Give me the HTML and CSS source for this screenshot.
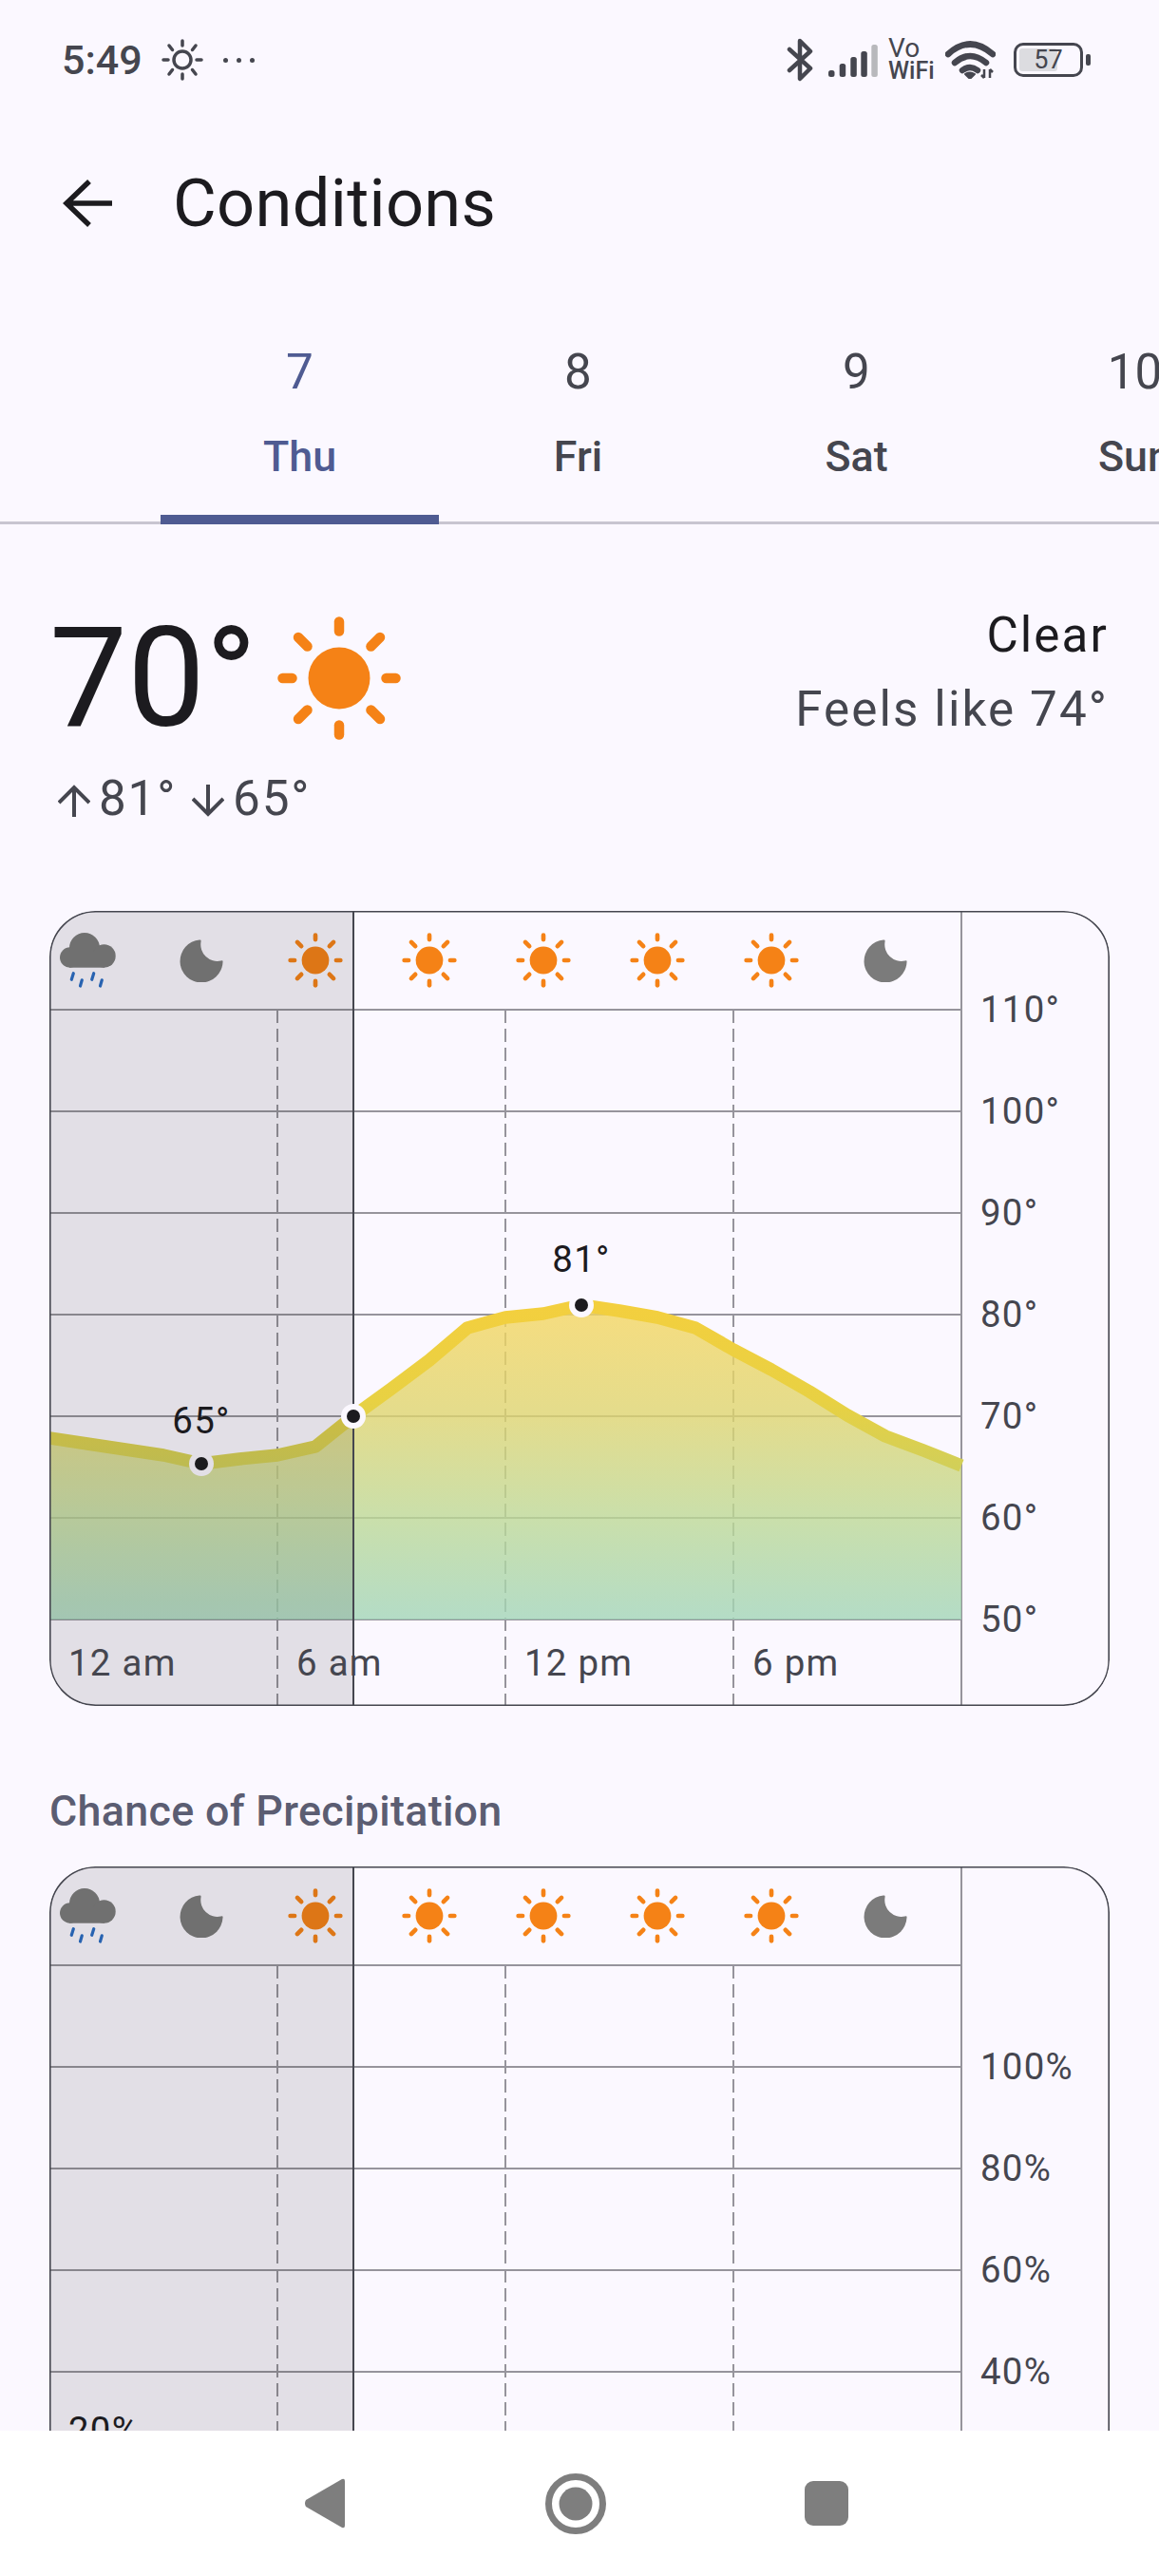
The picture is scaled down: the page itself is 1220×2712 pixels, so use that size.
FILE: index.html
```html
<!DOCTYPE html>
<html lang="en">
<head>
    <meta charset="UTF-8">
    <meta name="viewport" content="width=device-width, initial-scale=1.0">
    <title>Conditions</title>
    <link rel="stylesheet" href="styles.css">
</head>
<body>

<!-- shared icons and chart parts -->
<svg class="defs" aria-hidden="true">
    <defs>
        <g id="sun">
            <circle r="32.5"/>
            <g class="sun-rays">
                <line x1="0" y1="-49.5" x2="0" y2="-59.5"/>
                <line x1="0" y1="49.5" x2="0" y2="59.5"/>
                <line x1="-49.5" y1="0" x2="-59.5" y2="0"/>
                <line x1="49.5" y1="0" x2="59.5" y2="0"/>
                <line x1="33.5" y1="-33.5" x2="43" y2="-43"/>
                <line x1="-33.5" y1="-33.5" x2="-43" y2="-43"/>
                <line x1="33.5" y1="33.5" x2="43" y2="43"/>
                <line x1="-33.5" y1="33.5" x2="-43" y2="43"/>
            </g>
        </g>
        <symbol id="sun-small" viewBox="-70 -70 140 140">
            <use href="#sun" class="sun-icon"/>
        </symbol>
        <symbol id="moon" viewBox="0 0 46 46">
            <path class="moon-icon" d="M21 1.500A22.500 22.500 0 1 0 45.500 25Q46 22.500 43.500 23.500A17.500 17.500 0 0 1 22.500 3.500Q23 1 21 1.500Z"/>
        </symbol>
        <symbol id="rain-cloud" viewBox="0 0 59 59">
            <g class="moon-icon">
                <circle cx="10.7" cy="26" r="10.7"/>
                <circle cx="26" cy="16" r="16"/>
                <circle cx="46.5" cy="24.5" r="12.2"/>
                <rect x="10" y="20" width="37" height="16.7"/>
            </g>
            <g class="rain-drops">
                <line x1="14.3" y1="42.7" x2="12.3" y2="49.3"/>
                <line x1="23.3" y1="49.8" x2="21.5" y2="56"/>
                <line x1="35.7" y1="42.7" x2="33.7" y2="49.3"/>
                <line x1="44.3" y1="49.8" x2="42.5" y2="56"/>
            </g>
        </symbol>
        <g id="hour-icons">
            <use href="#rain-cloud" x="11" y="23" width="59" height="59"/>
            <use href="#moon" x="137" y="29" width="46" height="46"/>
            <use href="#sun-small" x="249" y="21" width="62" height="62"/>
            <use href="#sun-small" x="369" y="21" width="62" height="62"/>
            <use href="#sun-small" x="489" y="21" width="62" height="62"/>
            <use href="#sun-small" x="609" y="21" width="62" height="62"/>
            <use href="#sun-small" x="729" y="21" width="62" height="62"/>
            <use href="#moon" x="857" y="29" width="46" height="46"/>
        </g>
        <g id="chart-lines">
            <line class="grid" x1="0" y1="104" x2="960" y2="104"/>
            <line class="grid" x1="0" y1="211" x2="960" y2="211"/>
            <line class="grid" x1="0" y1="318" x2="960" y2="318"/>
            <line class="grid" x1="0" y1="425" x2="960" y2="425"/>
            <line class="grid" x1="0" y1="532" x2="960" y2="532"/>
            <line class="grid" x1="0" y1="639" x2="960" y2="639"/>
            <line class="grid" x1="0" y1="746" x2="960" y2="746"/>
            <line class="grid" x1="960" y1="0" x2="960" y2="837"/>
            <line class="dash" x1="240" y1="104" x2="240" y2="837"/>
            <line class="dash" x1="480" y1="104" x2="480" y2="837"/>
            <line class="dash" x1="720" y1="104" x2="720" y2="837"/>
        </g>
        <linearGradient id="temp-fill" gradientUnits="userSpaceOnUse" x1="0" y1="415" x2="0" y2="746">
            <stop offset="0" stop-color="#f5d65f"/>
            <stop offset="0.35" stop-color="#ded56f"/>
            <stop offset="0.68" stop-color="#bdd996"/>
            <stop offset="1" stop-color="#a2d5b8"/>
        </linearGradient>
        <linearGradient id="temp-line" gradientUnits="userSpaceOnUse" x1="0" y1="415" x2="0" y2="584">
            <stop offset="0" stop-color="#f3cf3e"/>
            <stop offset="0.6" stop-color="#e8d143"/>
            <stop offset="1" stop-color="#d2cf58"/>
        </linearGradient>
    </defs>
</svg>

<div class="status-bar">
    <span class="clock">5:49</span>
    <svg class="status-sun" width="44" height="44" viewBox="-22 -22 44 44">
        <circle r="9"/>
        <path d="M0-15V-20M0 15V20M-15 0H-20M15 0H20M10.500-10.500L14-15M-10.500-10.500L-14-15M10.500 10.500L14 15M-10.500 10.500L-14 15"/>
    </svg>
    <div class="status-dots"><i></i><i></i><i></i></div>

    <div class="status-right">
        <svg class="bluetooth" width="28" height="46" viewBox="0 0 28 46">
            <path d="M3 12L25 32L14 43V3L25 14L3 34"/>
        </svg>
        <svg class="signal" width="52" height="34" viewBox="0 0 52 34">
            <rect x="0" y="27" width="6.500" height="7" rx="2.500"/>
            <rect x="11.700" y="20" width="6.500" height="14" rx="2.500"/>
            <rect x="23.300" y="13" width="6.500" height="21" rx="2.500"/>
            <rect x="34.300" y="7" width="6.500" height="27" rx="2.500"/>
            <rect class="signal-off" x="45.300" y="0" width="6.500" height="34" rx="2.500"/>
        </svg>
        <div class="vowifi"><span class="vo">Vo</span><span>WiFi</span></div>
        <svg class="wifi" width="53" height="40" viewBox="0 0 53 40">
            <path class="wifi-arc" d="M3 14Q26-7 50 14"/>
            <path class="wifi-arc" d="M10 23Q26 9 43 23"/>
            <path class="wifi-arc" d="M18 31Q26 25 34 31"/>
            <path class="wifi-dot" d="M21 35Q26 32 31 35L26 40Z"/>
            <path class="wifi-updown" d="M41 30V39M38 36L41 39M47 39V30M47 30L50 33"/>
        </svg>
        <div class="battery">
            <div class="battery-fill"></div>
            <span class="battery-text">57</span>
        </div>
        <div class="battery-tail"></div>
    </div>
</div>

<div class="toolbar">
    <svg class="back-arrow" width="52" height="52" viewBox="0 0 52 52">
        <path d="M52 26H5M28 3L4 26L28 49"/>
    </svg>
    <h1>Conditions</h1>
</div>

<div class="tabs">
    <div class="tab active"><span class="tab-num">7</span><span class="tab-day">Thu</span></div>
    <div class="tab"><span class="tab-num">8</span><span class="tab-day">Fri</span></div>
    <div class="tab"><span class="tab-num">9</span><span class="tab-day">Sat</span></div>
    <div class="tab"><span class="tab-num">10</span><span class="tab-day">Sun</span></div>
</div>

<div class="summary">
    <div>
        <div class="now">
            <span class="now-temp">70°</span>
            <svg class="now-icon" width="140" height="140" viewBox="-70 -70 140 140">
                <use href="#sun" class="sun-icon"/>
            </svg>
        </div>
        <div class="hi-lo">
            <svg class="hi-lo-arrow" width="34" height="34" viewBox="0 0 34 34"><path d="M17 34V3M1 19L17 3L33 19"/></svg>
            <span>81°</span>
            <svg class="hi-lo-arrow down" width="34" height="34" viewBox="0 0 34 34"><path d="M17 0V31M1 15L17 31L33 15"/></svg>
            <span>65°</span>
        </div>
    </div>
    <div class="summary-right">
        <div>Clear</div>
        <div>Feels like 74°</div>
    </div>
</div>

<div class="card">
    <svg class="chart" width="1116" height="837" viewBox="0 0 1116 837">
        <use href="#hour-icons"/>
        <use href="#chart-lines"/>
        <path class="temp-area" d="M0 555L40 561L80 567L120 573L160 582L200 577L240 573L280 564L320 532L360 503L400 473L440 439L480 428L520 424L560 415L600 421L640 428L680 439L720 462L760 483L800 506L840 531L880 553L920 568L960 584V746H0Z"/>
        <path class="temp-line" d="M0 555L40 561L80 567L120 573L160 582L200 577L240 573L280 564L320 532L360 503L400 473L440 439L480 428L520 424L560 415L600 421L640 428L680 439L720 462L760 483L800 506L840 531L880 553L920 568L960 584"/>
        <circle class="dot-ring" cx="160" cy="582" r="13"/>
        <circle class="dot" cx="160" cy="582" r="7"/>
        <circle class="dot-ring" cx="560" cy="415" r="13"/>
        <circle class="dot" cx="560" cy="415" r="7"/>
        <rect class="past" x="0" y="0" width="320" height="837"/>
        <line class="now-line" x1="320" y1="0" x2="320" y2="837"/>
        <circle class="dot-ring" cx="320" cy="532" r="13"/>
        <circle class="dot" cx="320" cy="532" r="7"/>
        <text class="peak" x="160" y="550">65°</text>
        <text class="peak" x="560" y="380">81°</text>
        <text class="label" x="20" y="805">12 am</text>
        <text class="label" x="260" y="805">6 am</text>
        <text class="label" x="500" y="805">12 pm</text>
        <text class="label" x="740" y="805">6 pm</text>
        <text class="label" x="980" y="117">110°</text>
        <text class="label" x="980" y="224">100°</text>
        <text class="label" x="980" y="331">90°</text>
        <text class="label" x="980" y="438">80°</text>
        <text class="label" x="980" y="545">70°</text>
        <text class="label" x="980" y="652">60°</text>
        <text class="label" x="980" y="759">50°</text>
        <rect class="card-edge" x="0.800" y="0.800" width="1114.400" height="835.400" rx="48"/>
    </svg>
</div>

<h2 class="section-title">Chance of Precipitation</h2>

<div class="card">
    <svg class="chart" width="1116" height="837" viewBox="0 0 1116 837">
        <use href="#hour-icons"/>
        <use href="#chart-lines"/>
        <rect class="past" x="0" y="0" width="320" height="837"/>
        <line class="now-line" x1="320" y1="0" x2="320" y2="837"/>
        <text class="label dark" x="20" y="607">20%</text>
        <text class="label" x="980" y="224">100%</text>
        <text class="label" x="980" y="331">80%</text>
        <text class="label" x="980" y="438">60%</text>
        <text class="label" x="980" y="545">40%</text>
        <rect class="card-edge" x="0.800" y="0.800" width="1114.400" height="835.400" rx="48"/>
    </svg>
</div>

<div class="nav-bar">
    <svg width="43" height="53" viewBox="0 0 43 53">
        <path d="M40 1Q43 0 43 3V50Q43 53 40 52L2 30Q0 26.500 2 23Z"/>
    </svg>
    <svg class="nav-home" width="64" height="64" viewBox="0 0 64 64">
        <circle class="nav-ring" cx="32" cy="32" r="28.500"/>
        <circle cx="32" cy="32" r="17.500"/>
    </svg>
    <div class="nav-square"></div>
</div>

</body>
</html>
```

FILE: styles.css
```css
html, body {
    margin: 0;
    padding: 0;
}

body {
    width: 1220px;
    height: 2712px;
    overflow: hidden;
    position: relative;
    background-color: #fbf8ff;
    color: #1c1b1f;
    font-family: Roboto, sans-serif;
}

.defs {
    position: absolute;
    width: 0;
    height: 0;
}

/* status bar */
.status-bar {
    height: 126px;
    padding: 0 72px 0 65px;
    display: flex;
    align-items: center;
    color: #45464f;
}

.clock {
    width: 84px;
    font-size: 43px;
    font-weight: 500;
}

.status-sun {
    margin-left: 21px;
}

.status-sun circle, .status-sun path {
    fill: none;
    stroke: #45464f;
    stroke-width: 3.5;
    stroke-linecap: round;
}

.status-dots {
    display: flex;
    gap: 9px;
    margin-left: 21px;
}

.status-dots i {
    width: 5px;
    height: 5px;
    border-radius: 50%;
    background-color: #45464f;
}

.status-right {
    margin-left: auto;
    display: flex;
    align-items: center;
}

.bluetooth path {
    fill: none;
    stroke: #45464f;
    stroke-width: 4.5;
    stroke-linecap: round;
    stroke-linejoin: round;
}

.signal {
    margin-left: 16px;
    margin-top: 2px;
}

.signal rect {
    fill: #45464f;
}

.signal .signal-off {
    fill: #b8b8bc;
}

.vowifi {
    width: 48px;
    margin-left: 11px;
    display: flex;
    flex-direction: column;
    font-size: 25px;
    font-weight: 500;
    line-height: 24px;
}

.vo {
    font-size: 28px;
    font-weight: 400;
}

.wifi {
    margin-left: 12px;
}

.wifi-arc {
    fill: none;
    stroke: #45464f;
    stroke-width: 6.5;
    stroke-linecap: round;
}

.wifi-dot {
    fill: #45464f;
    stroke: #45464f;
    stroke-width: 2;
    stroke-linejoin: round;
}

.wifi-updown {
    fill: none;
    stroke: #45464f;
    stroke-width: 2.5;
}

.battery {
    margin-left: 19px;
    width: 73px;
    height: 36px;
    box-sizing: border-box;
    border: 3.5px solid #45464f;
    border-radius: 10px;
    position: relative;
    display: flex;
    align-items: center;
    justify-content: center;
}

.battery-fill {
    position: absolute;
    left: 3px;
    top: 3px;
    bottom: 3px;
    width: 40px;
    background-color: #dcdce0;
    border-radius: 3px;
}

.battery-text {
    position: relative;
    font-size: 27px;
    line-height: 28px;
}

.battery-tail {
    width: 5px;
    height: 12px;
    margin-left: 3px;
    border-radius: 2px;
    background-color: #45464f;
}

/* toolbar */
.toolbar {
    height: 176px;
    padding-left: 66px;
    display: flex;
    align-items: center;
}

.back-arrow path {
    fill: none;
    stroke: #1c1b1f;
    stroke-width: 5.5;
}

h1 {
    margin: 0 0 0 64px;
    font-size: 70.4px;
    font-weight: 400;
    letter-spacing: 0.3px;
}

/* day tabs */
.tabs {
    height: 193px;
    padding: 54px 0 0 169px;
    display: flex;
    border-bottom: 3px solid #c8c5d0;
}

.tab {
    flex: 0 0 293px;
    height: 196px;
    box-sizing: border-box;
    display: flex;
    flex-direction: column;
    align-items: center;
    color: #45464f;
}

.tab.active {
    color: #4f5b92;
    border-bottom: 10px solid #4f5b92;
}

.tab-num {
    font-size: 51.2px;
    line-height: 72px;
}

.tab-day {
    margin-top: 21px;
    font-size: 44.8px;
    font-weight: 500;
    line-height: 64px;
}

/* current conditions */
.summary {
    padding: 78px 53px 0 52px;
    height: 251px;
    display: flex;
    justify-content: space-between;
    margin-bottom: 78px;
}

.now {
    display: flex;
    height: 170px;
}

.now-temp {
    font-size: 146px;
    line-height: 170px;
}

.now-icon {
    margin: 14px 0 0 16px;
}

.sun-icon {
    fill: #f58216;
}

.sun-rays line {
    stroke: #f58216;
    stroke-width: 10.5;
    stroke-linecap: round;
}

.hi-lo {
    margin-top: 10px;
    display: flex;
    align-items: center;
    height: 60px;
    font-size: 51.2px;
    letter-spacing: 1.8px;
    color: #45464f;
}

.hi-lo-arrow {
    margin: 6px 9px 0 9px;
}

.hi-lo-arrow.down {
    margin-left: 16px;
}

.hi-lo-arrow path {
    fill: none;
    stroke: #45464f;
    stroke-width: 4;
}

.summary-right {
    text-align: right;
    font-size: 51.2px;
    line-height: 78px;
    letter-spacing: 2.1px;
    color: #45464f;
}

.summary-right div:first-child {
    color: #1c1b1f;
}

/* charts */
.card {
    width: 1116px;
    height: 837px;
    margin-left: 52px;
    border-radius: 48px;
    overflow: hidden;
}

.chart {
    display: block;
}

.moon-icon {
    fill: #7b7b7b;
}

.rain-drops line {
    stroke: #2a6cc4;
    stroke-width: 3.2;
    stroke-linecap: round;
}

.grid {
    stroke: #96949c;
    stroke-width: 2;
}

.dash {
    stroke: #96949c;
    stroke-width: 2;
    stroke-dasharray: 14 6;
}

.temp-area {
    fill: url(#temp-fill);
    fill-opacity: 0.8;
}

.temp-line {
    fill: none;
    stroke: url(#temp-line);
    stroke-width: 13.5;
    stroke-linejoin: round;
}

.dot-ring {
    fill: #fbf8ff;
}

.dot {
    fill: #1c1b1f;
}

.past {
    fill: rgba(28, 27, 31, 0.11);
}

.now-line {
    stroke: #45464f;
    stroke-width: 2;
}

.card-edge {
    fill: none;
    stroke: #45464f;
    stroke-width: 1.6;
}

.chart text {
    font-family: Roboto, sans-serif;
    font-size: 38.4px;
    letter-spacing: 1.28px;
}

.label {
    fill: #45464f;
}

.label.dark, .peak {
    fill: #1c1b1f;
}

.peak {
    text-anchor: middle;
}

.section-title {
    margin: 81px 0 28px 52px;
    font-size: 44.8px;
    font-weight: 500;
    line-height: 60px;
    letter-spacing: 0.32px;
    color: #5b5d72;
}

/* system nav */
.nav-bar {
    position: absolute;
    left: 0;
    right: 0;
    bottom: 0;
    height: 153px;
    padding-left: 320px;
    display: flex;
    align-items: center;
    background-color: #fff;
}

.nav-bar svg path, .nav-bar svg circle {
    fill: #7e7e7e;
}

.nav-home {
    margin-left: 211px;
}

.nav-bar svg .nav-ring {
    fill: none;
    stroke: #7e7e7e;
    stroke-width: 7;
}

.nav-square {
    width: 46px;
    height: 47px;
    margin-left: 209px;
    border-radius: 9px;
    background-color: #7e7e7e;
}
```
